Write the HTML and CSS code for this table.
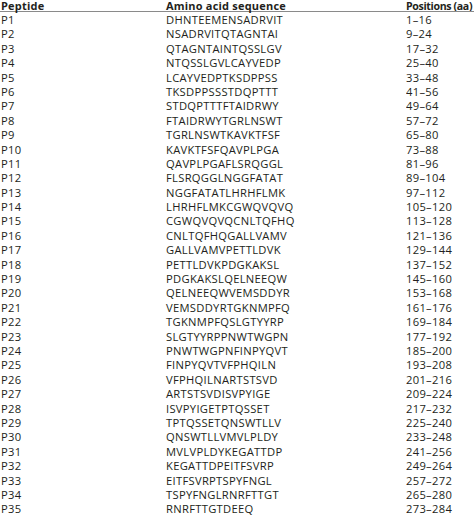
FILE: index.html
```html
<!DOCTYPE html>
<html>
<head>
<meta charset="utf-8">
<link rel="stylesheet" href="styles.css">
</head>
<body>
<div class="table">
  <div class="row head"><div class="c1">Peptide</div><div class="c2">Amino acid sequence</div><div class="c3">Positions (aa)</div></div>
  <div class="row"><div class="c1">P1</div><div class="c2">DHNTEEMENSADRVIT</div><div class="c3">1–16</div></div>
  <div class="row"><div class="c1">P2</div><div class="c2">NSADRVITQTAGNTAI</div><div class="c3">9–24</div></div>
  <div class="row"><div class="c1">P3</div><div class="c2">QTAGNTAINTQSSLGV</div><div class="c3">17–32</div></div>
  <div class="row"><div class="c1">P4</div><div class="c2">NTQSSLGVLCAYVEDP</div><div class="c3">25–40</div></div>
  <div class="row"><div class="c1">P5</div><div class="c2">LCAYVEDPTKSDPPSS</div><div class="c3">33–48</div></div>
  <div class="row"><div class="c1">P6</div><div class="c2">TKSDPPSSSTDQPTTT</div><div class="c3">41–56</div></div>
  <div class="row"><div class="c1">P7</div><div class="c2">STDQPTTTFTAIDRWY</div><div class="c3">49–64</div></div>
  <div class="row"><div class="c1">P8</div><div class="c2">FTAIDRWYTGRLNSWT</div><div class="c3">57–72</div></div>
  <div class="row"><div class="c1">P9</div><div class="c2">TGRLNSWTKAVKTFSF</div><div class="c3">65–80</div></div>
  <div class="row"><div class="c1">P10</div><div class="c2">KAVKTFSFQAVPLPGA</div><div class="c3">73–88</div></div>
  <div class="row"><div class="c1">P11</div><div class="c2">QAVPLPGAFLSRQGGL</div><div class="c3">81–96</div></div>
  <div class="row"><div class="c1">P12</div><div class="c2">FLSRQGGLNGGFATAT</div><div class="c3">89–104</div></div>
  <div class="row"><div class="c1">P13</div><div class="c2">NGGFATATLHRHFLMK</div><div class="c3">97–112</div></div>
  <div class="row"><div class="c1">P14</div><div class="c2">LHRHFLMKCGWQVQVQ</div><div class="c3">105–120</div></div>
  <div class="row"><div class="c1">P15</div><div class="c2">CGWQVQVQCNLTQFHQ</div><div class="c3">113–128</div></div>
  <div class="row"><div class="c1">P16</div><div class="c2">CNLTQFHQGALLVAMV</div><div class="c3">121–136</div></div>
  <div class="row"><div class="c1">P17</div><div class="c2">GALLVAMVPETTLDVK</div><div class="c3">129–144</div></div>
  <div class="row"><div class="c1">P18</div><div class="c2">PETTLDVKPDGKAKSL</div><div class="c3">137–152</div></div>
  <div class="row"><div class="c1">P19</div><div class="c2">PDGKAKSLQELNEEQW</div><div class="c3">145–160</div></div>
  <div class="row"><div class="c1">P20</div><div class="c2">QELNEEQWVEMSDDYR</div><div class="c3">153–168</div></div>
  <div class="row"><div class="c1">P21</div><div class="c2">VEMSDDYRTGKNMPFQ</div><div class="c3">161–176</div></div>
  <div class="row"><div class="c1">P22</div><div class="c2">TGKNMPFQSLGTYYRP</div><div class="c3">169–184</div></div>
  <div class="row"><div class="c1">P23</div><div class="c2">SLGTYYRPPNWTWGPN</div><div class="c3">177–192</div></div>
  <div class="row"><div class="c1">P24</div><div class="c2">PNWTWGPNFINPYQVT</div><div class="c3">185–200</div></div>
  <div class="row"><div class="c1">P25</div><div class="c2">FINPYQVTVFPHQILN</div><div class="c3">193–208</div></div>
  <div class="row"><div class="c1">P26</div><div class="c2">VFPHQILNARTSTSVD</div><div class="c3">201–216</div></div>
  <div class="row"><div class="c1">P27</div><div class="c2">ARTSTSVDISVPYIGE</div><div class="c3">209–224</div></div>
  <div class="row"><div class="c1">P28</div><div class="c2">ISVPYIGETPTQSSET</div><div class="c3">217–232</div></div>
  <div class="row"><div class="c1">P29</div><div class="c2">TPTQSSETQNSWTLLV</div><div class="c3">225–240</div></div>
  <div class="row"><div class="c1">P30</div><div class="c2">QNSWTLLVMVLPLDY</div><div class="c3">233–248</div></div>
  <div class="row"><div class="c1">P31</div><div class="c2">MVLVPLDYKEGATTDP</div><div class="c3">241–256</div></div>
  <div class="row"><div class="c1">P32</div><div class="c2">KEGATTDPEITFSVRP</div><div class="c3">249–264</div></div>
  <div class="row"><div class="c1">P33</div><div class="c2">EITFSVRPTSPYFNGL</div><div class="c3">257–272</div></div>
  <div class="row"><div class="c1">P34</div><div class="c2">TSPYFNGLRNRFTTGT</div><div class="c3">265–280</div></div>
  <div class="row"><div class="c1">P35</div><div class="c2">RNRFTTGTDEEQ</div><div class="c3">273–284</div></div>
</div>
</body>
</html>
```
FILE: styles.css
```css
html, body {
  margin: 0;
  padding: 0;
  background: #ffffff;
  overflow: hidden;
}
.table {
  width: 474px;
  font-family: "Open Sans", "Noto Sans", sans-serif;
  font-size: 11.2px;
  letter-spacing: 0.3px;
  color: #231f20;
}
.row {
  display: grid;
  grid-template-columns: 166px 240px 1fr;
  height: 14.4px;
  align-items: center;
  white-space: nowrap;
}
.row .c1 { padding-left: 1px; }
.head {
  height: 10.5px;
  font-size: 11px;
  letter-spacing: 0.2px;
  font-weight: 700;
  border-bottom: 1.5px solid #8a8a8a;
  align-items: end;
  line-height: 10px;
  padding-bottom: 0.5px;
}
.head .c3 {
  font-size: 10.6px;
  letter-spacing: -0.35px;
}
.c3 { padding-left: 0; overflow: hidden; }
```
